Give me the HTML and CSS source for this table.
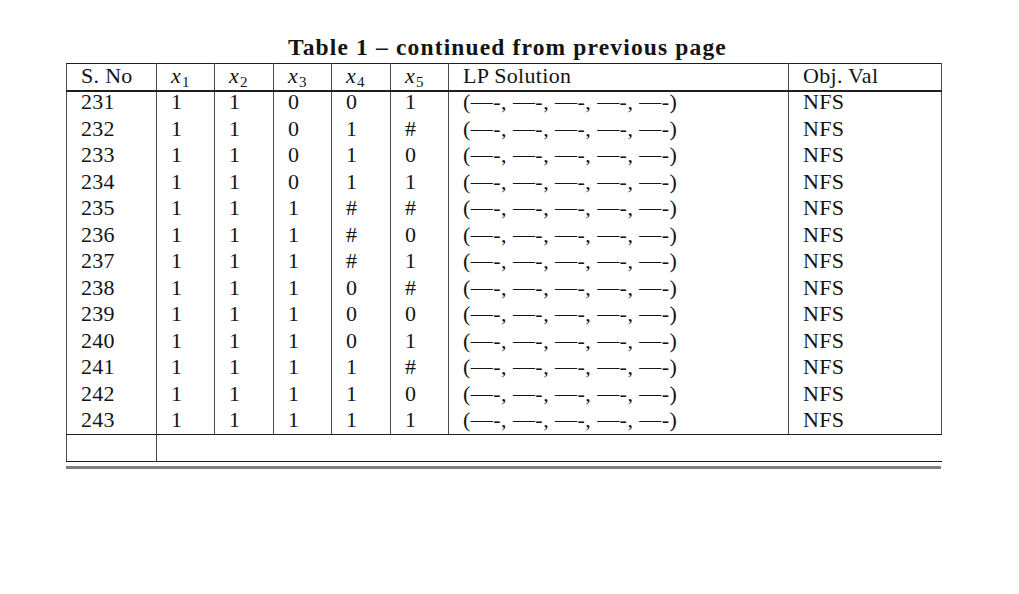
FILE: index.html
```html
<!DOCTYPE html>
<html lang="en">
<head>
<meta charset="utf-8">
<title>Table 1 – continued from previous page</title>
<link rel="stylesheet" href="styles.css">
</head>
<body>
<div class="page">
  <div class="sheet">
    <div class="caption">Table 1 – continued from previous page</div>
    <table class="lp">
      <colgroup>
        <col class="c-no">
        <col class="c-x">
        <col class="c-x2">
        <col class="c-x">
        <col class="c-x2">
        <col class="c-x">
        <col class="c-sol">
        <col class="c-obj">
      </colgroup>
      <thead>
        <tr>
          <th>S. No</th>
          <th><i class="mv">x</i><sub class="ms">1</sub></th>
          <th><i class="mv">x</i><sub class="ms">2</sub></th>
          <th><i class="mv">x</i><sub class="ms">3</sub></th>
          <th><i class="mv">x</i><sub class="ms">4</sub></th>
          <th><i class="mv">x</i><sub class="ms">5</sub></th>
          <th>LP Solution</th>
          <th>Obj. Val</th>
        </tr>
      </thead>
      <tbody>
        <tr><td>231</td><td>1</td><td>1</td><td>0</td><td>0</td><td>1</td><td class="sol">(—-, —-, —-, —-, —-)</td><td>NFS</td></tr>
        <tr><td>232</td><td>1</td><td>1</td><td>0</td><td>1</td><td>#</td><td class="sol">(—-, —-, —-, —-, —-)</td><td>NFS</td></tr>
        <tr><td>233</td><td>1</td><td>1</td><td>0</td><td>1</td><td>0</td><td class="sol">(—-, —-, —-, —-, —-)</td><td>NFS</td></tr>
        <tr><td>234</td><td>1</td><td>1</td><td>0</td><td>1</td><td>1</td><td class="sol">(—-, —-, —-, —-, —-)</td><td>NFS</td></tr>
        <tr><td>235</td><td>1</td><td>1</td><td>1</td><td>#</td><td>#</td><td class="sol">(—-, —-, —-, —-, —-)</td><td>NFS</td></tr>
        <tr><td>236</td><td>1</td><td>1</td><td>1</td><td>#</td><td>0</td><td class="sol">(—-, —-, —-, —-, —-)</td><td>NFS</td></tr>
        <tr><td>237</td><td>1</td><td>1</td><td>1</td><td>#</td><td>1</td><td class="sol">(—-, —-, —-, —-, —-)</td><td>NFS</td></tr>
        <tr><td>238</td><td>1</td><td>1</td><td>1</td><td>0</td><td>#</td><td class="sol">(—-, —-, —-, —-, —-)</td><td>NFS</td></tr>
        <tr><td>239</td><td>1</td><td>1</td><td>1</td><td>0</td><td>0</td><td class="sol">(—-, —-, —-, —-, —-)</td><td>NFS</td></tr>
        <tr><td>240</td><td>1</td><td>1</td><td>1</td><td>0</td><td>1</td><td class="sol">(—-, —-, —-, —-, —-)</td><td>NFS</td></tr>
        <tr><td>241</td><td>1</td><td>1</td><td>1</td><td>1</td><td>#</td><td class="sol">(—-, —-, —-, —-, —-)</td><td>NFS</td></tr>
        <tr><td>242</td><td>1</td><td>1</td><td>1</td><td>1</td><td>0</td><td class="sol">(—-, —-, —-, —-, —-)</td><td>NFS</td></tr>
        <tr class="last"><td>243</td><td>1</td><td>1</td><td>1</td><td>1</td><td>1</td><td class="sol">(—-, —-, —-, —-, —-)</td><td>NFS</td></tr>
      </tbody>
      <tfoot>
        <tr class="blank"><td class="b-first"></td><td class="b-rest" colspan="7"></td></tr>
      </tfoot>
    </table>
    <div class="rule"></div>
  </div>
</div>
</body>
</html>
```

FILE: styles.css
```css
html, body {
  margin: 0;
  padding: 0;
  background: #ffffff;
}

body {
  font-family: "Liberation Serif", "Times New Roman", serif;
  color: #141414;
}

.page {
  padding: 34px 0 0 66px;
}

.sheet {
  width: 875px;
}

.caption {
  text-align: center;
  font-weight: bold;
  font-size: 23.5px;
  letter-spacing: 1.15px;
  line-height: 26px;
  height: 26px;
  margin: 0 0 3px 8px;
  white-space: nowrap;
}

.lp {
  width: 875px;
  table-layout: fixed;
  border-collapse: collapse;
  font-size: 22px;
  letter-spacing: 0.3px;
}

.c-no { width: 90px; }
.c-x { width: 58px; }
.c-x2 { width: 59px; }
.c-sol { width: 340px; }
.c-obj { width: 153px; }

.lp th,
.lp td {
  text-align: left;
  font-weight: normal;
  white-space: nowrap;
  vertical-align: top;
  border-left: 1px solid #4a4a4a;
  border-right: 1px solid #4a4a4a;
}

.lp th {
  line-height: 20px;
  padding: 2px 14px 4px 14px;
  border-top: 1px solid #1e1e1e;
  border-bottom: 2px solid #1e1e1e;
}

.lp td {
  line-height: 20.5px;
  padding: 0 14px 6px 14px;
}

.lp td.sol {
  letter-spacing: 0.45px;
}

.lp tr.last td {
  border-bottom: 1px solid #1e1e1e;
  line-height: 20.5px;
  padding-bottom: 3.5px;
}

.lp tr.blank td {
  height: 26px;
  padding: 0;
  border-bottom: 1px solid #1e1e1e;
}

.lp tr.blank td.b-rest {
  border-right: none;
}

.mv {
  font-style: italic;
}

.ms {
  font-size: 15px;
  line-height: 0;
  vertical-align: -4px;
  margin-left: 1px;
}

.rule {
  height: 3px;
  margin-top: 4px;
  background: #808080;
}
```
